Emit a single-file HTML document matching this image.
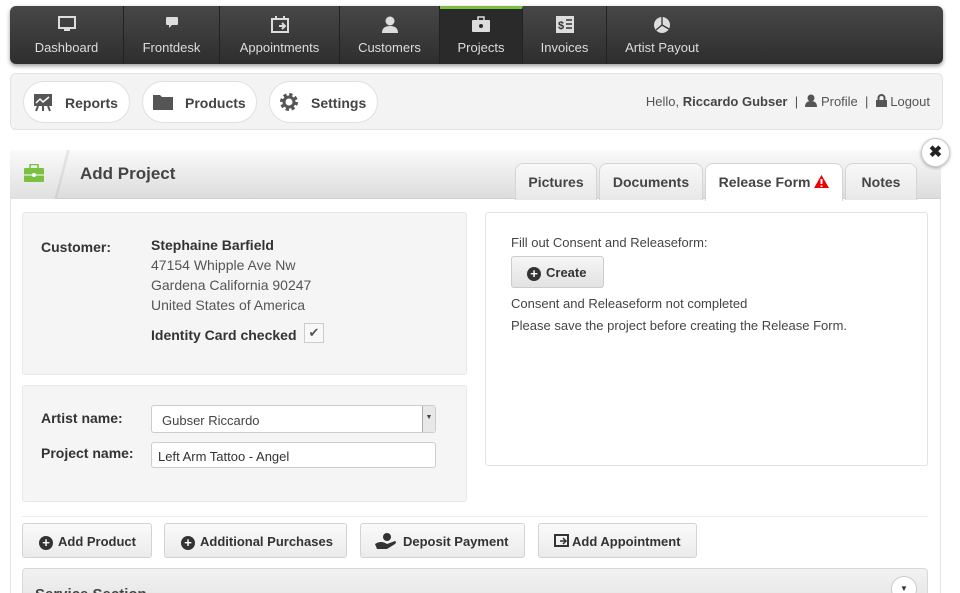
<!DOCTYPE html>
<html><head><meta charset="utf-8"><style>
*{box-sizing:border-box;margin:0;padding:0}
html,body{width:960px;height:593px;overflow:hidden}
body{background:#fff;font-family:"Liberation Sans",sans-serif;color:#333;position:relative}
.abs{position:absolute}
.nav{left:10px;top:6px;width:933px;height:58px;background:linear-gradient(#474747,#2e2e2e);border-radius:6px;box-shadow:0 2px 4px rgba(0,0,0,.4);display:flex}
.nav div{height:58px;border-right:1px solid #222;color:#ddd;font-size:13px;text-align:center;padding-top:34px;position:relative}
.nav div svg{position:absolute;left:50%;top:10px;transform:translateX(-50%)}
.nav .act{background:#2a2a2a;border-top:3px solid #7ac143}
.sub{left:10px;top:73px;width:933px;height:57px;background:#f3f3f3;border:1px solid #e3e3e3;border-radius:6px}
.pill{position:absolute;top:7px;height:42px;background:#fff;border:1px solid #e0e0e0;border-radius:21px;font-size:14px;font-weight:bold;color:#444;padding:13px 0 0 0}
.panel{left:10px;top:150px;width:931px;height:460px;border:1px solid #e3e3e3;background:#fff}
.hdr{left:10px;top:150px;width:931px;height:49px;background:linear-gradient(#fafafa,#dcdcdc);border-bottom:1px solid #d0d0d0}
.tab{position:absolute;top:163px;height:37px;background:linear-gradient(#f8f8f8,#e8e8e8);border:1px solid #d5d5d5;border-bottom:none;border-radius:8px 8px 0 0;font-size:14px;font-weight:bold;color:#444;text-align:center;padding-top:10px}
.box{background:#f5f5f5;border:1px solid #e8e8e8;border-radius:3px}
.b{font-weight:bold}
.btn{position:absolute;top:523px;height:35px;background:linear-gradient(#fafafa,#ebebeb);border:1px solid #d3d3d3;border-radius:3px;font-size:13px;font-weight:bold;color:#333;padding-top:10px}
.plus{display:inline-block;width:14px;height:14px;border-radius:50%;background:#333;color:#fff;font-size:13px;line-height:14px;text-align:center;vertical-align:-1px;margin-right:5px}
</style></head><body>
<div class="abs nav">
 <div style="width:114px">Dashboard<svg width="18" height="16"><rect x="1" y="1" width="16" height="11" fill="none" stroke="#ddd" stroke-width="2"/><rect x="6" y="13" width="6" height="2" fill="#ddd"/></svg></div>
 <div style="width:96px">Frontdesk<svg width="14" height="12"><rect x="1" y="1" width="12" height="8" rx="1" fill="#ddd"/><path d="M4 9l0 3 3-3z" fill="#ddd"/></svg></div>
 <div style="width:120px">Appointments<svg width="18" height="17"><rect x="1" y="3" width="16" height="13" fill="none" stroke="#ddd" stroke-width="2"/><rect x="4" y="0" width="2" height="4" fill="#ddd"/><rect x="12" y="0" width="2" height="4" fill="#ddd"/><path d="M8 10h6M11 7l3 3-3 3" stroke="#ddd" stroke-width="2" fill="none"/></svg></div>
 <div style="width:100px">Customers<svg width="16" height="17"><circle cx="8" cy="5" r="4.5" fill="#ddd"/><path d="M0 17q0-7 8-7t8 7z" fill="#ddd"/></svg></div>
 <div class="act" style="width:83px;padding-top:31px">Projects<svg width="18" height="16" style="top:7px"><rect x="0" y="4" width="18" height="12" rx="1" fill="#ddd"/><rect x="6" y="1" width="6" height="4" fill="none" stroke="#ddd" stroke-width="1.5"/><circle cx="9" cy="10" r="2" fill="#2a2a2a"/></svg></div>
 <div style="width:84px">Invoices<svg width="18" height="17"><rect x="0" y="0" width="18" height="17" fill="#ddd"/><text x="2" y="13" font-size="11" font-weight="bold" fill="#333">$</text><path d="M10 4h6M10 8h6M10 12h6" stroke="#333" stroke-width="1.5"/></svg></div>
 <div style="width:110px;border-right:none">Artist Payout<svg width="18" height="18"><circle cx="9" cy="9" r="8" fill="#ddd"/><path d="M9 9V1M9 9l7 4M9 9l-6 5" stroke="#333" stroke-width="1.3"/></svg></div>
</div>
<div class="abs sub">
 <div class="pill" style="left:12px;width:107px;padding-left:41px">Reports<svg class="abs" style="left:9px;top:10px" width="20" height="20"><rect x="1" y="2" width="18" height="12" fill="#555"/><path d="M3 11l4-4 3 3 6-5" stroke="#fff" stroke-width="1.5" fill="none"/><path d="M5 14l-2 5M15 14l2 5M10 14v5" stroke="#555" stroke-width="2"/></svg></div>
 <div class="pill" style="left:131px;width:115px;padding-left:42px">Products<svg class="abs" style="left:10px;top:11px" width="20" height="17"><path d="M0 2h7l2 2h11v13H0z" fill="#555"/></svg></div>
 <div class="pill" style="left:258px;width:109px;padding-left:41px">Settings<svg class="abs" style="left:9px;top:10px" width="20" height="20"><circle cx="10" cy="10" r="7" fill="none" stroke="#555" stroke-width="4" stroke-dasharray="3 2.5"/><circle cx="10" cy="10" r="5" fill="none" stroke="#555" stroke-width="3"/></svg></div>
 <div class="abs" style="right:12px;top:20px;font-size:13px;color:#555">Hello, <span class="b" style="color:#444">Riccardo Gubser</span> &nbsp;|&nbsp; <svg width="12" height="13" style="vertical-align:-1px"><circle cx="6" cy="4" r="3.5" fill="#555"/><path d="M0 13q0-6 6-6t6 6z" fill="#555"/></svg> Profile &nbsp;|&nbsp; <svg width="11" height="13" style="vertical-align:-1px"><path d="M2.5 6V4a3 3 0 016 0v2" stroke="#555" stroke-width="2" fill="none"/><rect x="0" y="6" width="11" height="7" fill="#555"/></svg> Logout</div>
</div>
<div class="abs panel"></div>
<div class="abs hdr"></div>
<div class="abs" style="left:10px;top:150px;width:60px;height:49px;background:linear-gradient(#e8e8e8,#cfcfcf);clip-path:polygon(0 0,100% 0,78% 100%,0 100%)"></div>
<div class="abs" style="left:10px;top:150px;width:57px;height:49px;background:linear-gradient(#fafafa,#e0e0e0);clip-path:polygon(0 0,100% 0,78% 100%,0 100%)"></div>
<svg class="abs" style="left:24px;top:164px" width="20" height="18"><rect x="0" y="4" width="20" height="14" rx="1" fill="#7ac143"/><rect x="6" y="0.5" width="8" height="4.5" fill="none" stroke="#7ac143" stroke-width="1.5"/><path d="M0 11h20" stroke="#fff" stroke-width="1"/><circle cx="10" cy="11" r="2" fill="#fff"/></svg>
<div class="abs" style="left:80px;top:164px;font-size:17px;font-weight:bold;color:#444">Add Project</div>
<div class="tab" style="left:515px;width:82px">Pictures</div>
<div class="tab" style="left:599px;width:104px">Documents</div>
<div class="tab" style="left:705px;width:138px;background:#fff;height:38px">Release Form <svg width="15" height="13" style="vertical-align:-1px"><path d="M7.5 0L15 13H0z" fill="#e00"/><path d="M7.5 4v5M7.5 10.5v1.5" stroke="#fff" stroke-width="2"/></svg></div>
<div class="tab" style="left:845px;width:72px">Notes</div>
<div class="abs" style="left:921px;top:138px;width:29px;height:29px;border-radius:50%;background:#fff;border:1px solid #ccc;box-shadow:0 1px 3px rgba(0,0,0,.3);font-weight:bold;font-size:16px;text-align:center;line-height:27px;color:#222">✖</div>

<div class="abs box" style="left:22px;top:212px;width:445px;height:163px"></div>
<div class="abs" style="left:41px;top:237px;font-size:14px;line-height:20px" ><span class="b">Customer:</span></div>
<div class="abs" style="left:151px;top:235px;font-size:14px;line-height:20px;color:#555"><span class="b" style="color:#333">Stephaine Barfield</span><br>47154 Whipple Ave Nw<br>Gardena California 90247<br>United States of America</div>
<div class="abs b" style="left:151px;top:327px;font-size:14px">Identity Card checked</div>
<div class="abs" style="left:304px;top:323px;width:20px;height:20px;border:1px solid #ccc;background:#f8f8f8;font-size:13px;text-align:center;line-height:18px;color:#555">✔</div>
<div class="abs box" style="left:22px;top:385px;width:445px;height:117px"></div>
<div class="abs b" style="left:41px;top:410px;font-size:14px">Artist name:</div>
<div class="abs b" style="left:41px;top:445px;font-size:14px">Project name:</div>
<div class="abs" style="left:151px;top:405px;width:285px;height:28px;background:#fff;border:1px solid #ccc;border-radius:3px;font-size:13px;padding:7px 10px;color:#444">Gubser Riccardo<div class="abs" style="right:0;top:0;width:13px;height:26px;background:#e8e8e8;border-left:1px solid #aaa;font-size:7px;text-align:center;line-height:24px">▼</div></div>
<div class="abs" style="left:151px;top:442px;width:285px;height:26px;background:#fff;border:1px solid #ccc;border-radius:3px;font-size:13px;padding:6px 6px;color:#333">Left Arm Tattoo - Angel</div>

<div class="abs" style="left:485px;top:212px;width:443px;height:254px;border:1px solid #e3e3e3;border-radius:3px;background:#fff"></div>
<div class="abs" style="left:511px;top:235px;font-size:13px;color:#444">Fill out Consent and Releaseform:</div>
<div class="abs" style="left:511px;top:256px;width:93px;height:32px;background:linear-gradient(#f6f6f6,#e2e2e2);border:1px solid #ccc;border-radius:3px;font-size:13px;font-weight:bold;padding:8px 0 0 15px"><span class="plus">+</span>Create</div>
<div class="abs" style="left:511px;top:293px;font-size:13px;line-height:22px;color:#444">Consent and Releaseform not completed<br>Please save the project before creating the Release Form.</div>

<div class="abs" style="left:22px;top:516px;width:906px;height:1px;background:#ececec"></div>
<div class="btn" style="left:22px;width:130px;padding-left:16px"><span class="plus">+</span>Add Product</div>
<div class="btn" style="left:164px;width:183px;padding-left:16px"><span class="plus">+</span>Additional Purchases</div>
<div class="btn" style="left:360px;width:165px;padding-left:14px;padding-top:8px"><svg width="22" height="18" style="vertical-align:-4px;margin-right:6px"><circle cx="12" cy="5" r="4" fill="#333"/><path d="M0 12q6-4 12 0l8-3q2 1 0 3l-8 5H2z" fill="#333"/></svg>Deposit Payment</div>
<div class="btn" style="left:538px;width:159px;padding-left:15px"><svg width="15" height="13" style="vertical-align:-1px;margin-right:3px"><rect x="1" y="1" width="13" height="11" fill="none" stroke="#333" stroke-width="2"/><path d="M6 7h6M9 4l3 3-3 3" stroke="#333" stroke-width="1.5" fill="none"/></svg>Add Appointment</div>
<div class="abs" style="left:22px;top:568px;width:906px;height:40px;background:linear-gradient(#f2f2f2,#e4e4e4);border:1px solid #d8d8d8;border-radius:4px;font-size:15px;font-weight:bold;color:#444;padding:17px 0 0 12px">Service Section</div>
<div class="abs" style="left:891px;top:576px;width:26px;height:26px;border-radius:50%;background:#fff;border:1px solid #ccc;font-size:8px;text-align:center;line-height:24px">▼</div>
</body></html>
